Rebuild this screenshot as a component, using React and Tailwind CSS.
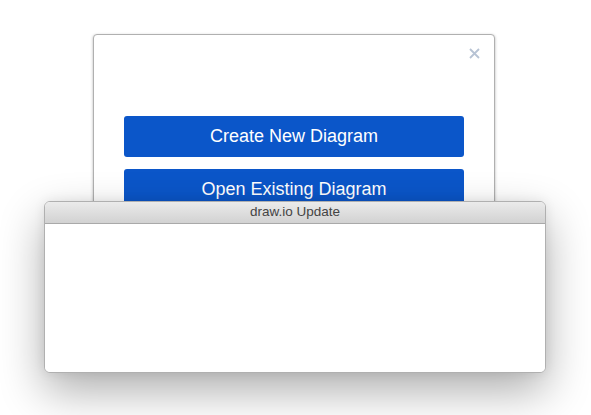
export default function App() {
  return (
    <div
      className="relative w-[591px] h-[415px] overflow-hidden bg-white"
      style={{ fontFamily: '"Liberation Sans", Arial, sans-serif' }}
    >
      {/* Back dialog */}
      <div className="ml-[93px] mt-[34px] w-[402px] h-[260px] bg-white border border-[#b0b0b0] rounded-[4px] shadow-[0_1px_3px_rgba(0,0,0,0.3)] flex flex-col">
        <div className="flex justify-end pt-[13px] pr-[14px] h-[81px]">
          <svg width="11" height="11" viewBox="0 0 11 11">
            <path d="M1 1L10 10M10 1L1 10" stroke="#b7c3d4" strokeWidth="1.8" />
          </svg>
        </div>
        <div className="flex flex-col gap-[12px] px-[30px]">
          <button className="h-[41px] w-full rounded-[3px] bg-[#0b56c9] text-white text-[18px]">
            Create New Diagram
          </button>
          <button className="h-[41px] w-full rounded-[3px] bg-[#0b56c9] text-white text-[18px]">
            Open Existing Diagram
          </button>
        </div>
      </div>

      {/* Update window */}
      <div className="absolute left-[44px] top-[201px] w-[502px] h-[172px] bg-white border border-[#b0b0b0] rounded-[6px] overflow-hidden shadow-[0_18px_45px_rgba(0,0,0,0.32),0_0_12px_rgba(0,0,0,0.08)] flex flex-col">
        <div className="h-[22px] shrink-0 bg-gradient-to-b from-[#ebebeb] to-[#d2d2d2] border-b border-[#a9a9a9] flex items-center justify-center text-[13.5px] text-[#444444]">
          draw.io Update
        </div>
        <div className="flex-1 bg-white" />
      </div>
    </div>
  );
}
